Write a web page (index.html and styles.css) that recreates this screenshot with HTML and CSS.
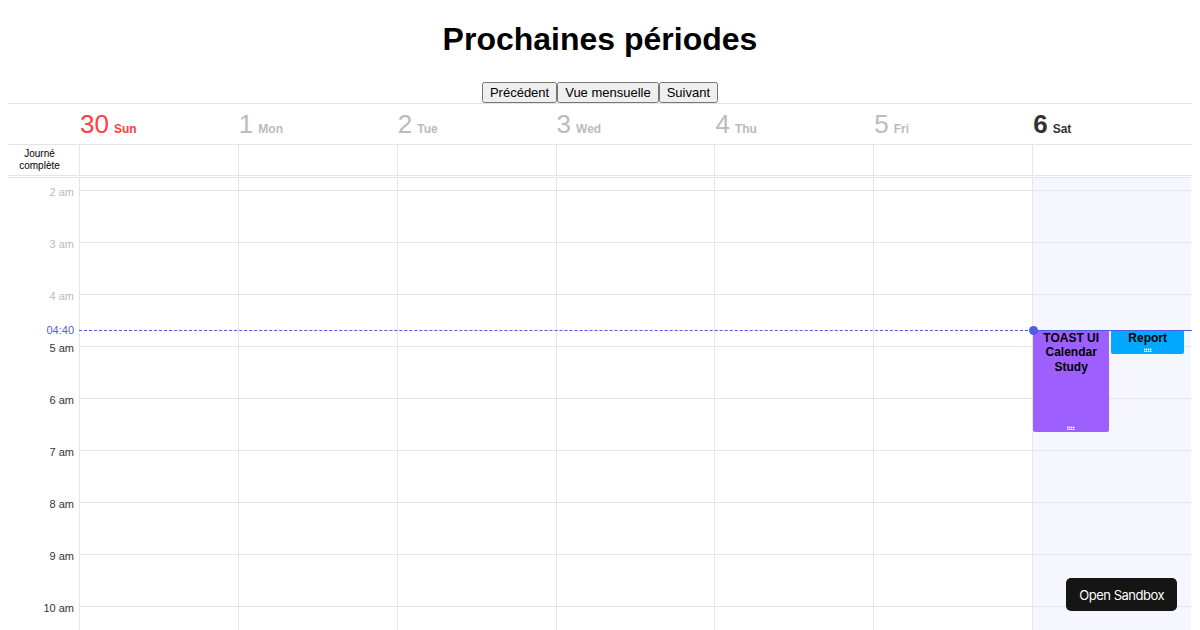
FILE: index.html
```html
<!DOCTYPE html>
<html lang="fr">
<head>
<meta charset="utf-8">
<title>Prochaines périodes</title>
<link rel="stylesheet" href="styles.css">
</head>
<body>
<h1 class="title">Prochaines périodes</h1>
<div class="nav"><button class="nav-btn">Précédent</button><button class="nav-btn">Vue mensuelle</button><button class="nav-btn">Suivant</button></div>
<div class="calendar">
  <div class="row day-names">
    <div class="time-col"></div>
    <div class="days">
      <div class="day-name is-sunday"><span class="num">30</span><span class="dname">Sun</span></div>
      <div class="day-name"><span class="num">1</span><span class="dname">Mon</span></div>
      <div class="day-name"><span class="num">2</span><span class="dname">Tue</span></div>
      <div class="day-name"><span class="num">3</span><span class="dname">Wed</span></div>
      <div class="day-name"><span class="num">4</span><span class="dname">Thu</span></div>
      <div class="day-name"><span class="num">5</span><span class="dname">Fri</span></div>
      <div class="day-name is-today"><span class="num">6</span><span class="dname">Sat</span></div>
    </div>
  </div>
  <div class="row allday">
    <div class="time-col allday-label">Journé<br>complète</div>
    <div class="days">
      <div class="col"></div><div class="col"></div><div class="col"></div><div class="col"></div><div class="col"></div><div class="col"></div><div class="col"></div>
    </div>
  </div>
  <div class="splitter"></div>
  <div class="row timegrid">
    <div class="time-col times">
      <div class="hour past">2 am</div>
      <div class="hour past">3 am</div>
      <div class="hour past">4 am</div>
      <div class="hour">5 am</div>
      <div class="hour">6 am</div>
      <div class="hour">7 am</div>
      <div class="hour">8 am</div>
      <div class="hour">9 am</div>
      <div class="hour">10 am</div>
      <div class="now-label">04:40</div>
    </div>
    <div class="days grid-days">
      <div class="col hours"></div>
      <div class="col hours"></div>
      <div class="col hours"></div>
      <div class="col hours"></div>
      <div class="col hours"></div>
      <div class="col hours"></div>
      <div class="col hours today">
        <div class="event ev-study">TOAST UI Calendar Study<span class="handle"></span></div>
        <div class="event ev-report">Report<span class="handle"></span></div>
      </div>
      <div class="now-line">
        <div class="now-past"></div>
        <div class="now-today"><span class="now-dot"></span></div>
      </div>
    </div>
  </div>
</div>
<a class="sandbox-btn">Open Sandbox</a>
</body>
</html>
```

FILE: styles.css
```css
html {
  overflow: hidden;
}

body {
  margin: 8px;
  font-family: "Liberation Sans", Arial, sans-serif;
  color: #000;
  background: #fff;
}

.title {
  font-size: 32px;
  font-weight: bold;
  text-align: center;
  margin: 13.44px 0 21.44px;
}

.nav {
  display: flex;
  justify-content: center;
  padding-top: 2px;
}

.nav-btn {
  font: 13px "Liberation Sans", Arial, sans-serif;
  margin: 0;
}

.calendar {
  border-top: 1px solid #e5e5e5;
}

.row {
  display: flex;
}

.time-col {
  width: 71px;
  flex: none;
  box-sizing: border-box;
}

.days {
  flex: 1;
  display: flex;
  padding-right: 1px;
  min-width: 0;
}

.day-names {
  height: 40px;
  border-bottom: 1px solid #e5e5e5;
}

.day-name {
  flex: 1;
  min-width: 0;
  box-sizing: border-box;
  border-left: 1px solid transparent;
  line-height: 40px;
  white-space: nowrap;
  color: #bbb;
}

.num {
  font-size: 26px;
}

.dname {
  font-size: 12px;
  font-weight: bold;
  margin-left: 5px;
}

.is-sunday {
  color: #ff4040;
}

.is-today {
  color: #333;
}

.is-today .num {
  font-weight: bold;
}

.allday {
  height: 30px;
  border-bottom: 1px solid #e5e5e5;
}

.allday-label {
  display: flex;
  align-items: center;
  justify-content: center;
  text-align: center;
  font-size: 10px;
  line-height: 11.5px;
  padding-right: 8px;
  color: #000;
}

.col {
  flex: 1;
  min-width: 0;
  box-sizing: border-box;
  border-left: 1px solid #e5e5e5;
}

.splitter {
  height: 1px;
  border-bottom: 1px solid #e5e5e5;
}

.timegrid {
  height: 452px;
  overflow: hidden;
}

.times {
  position: relative;
  padding-top: 8px;
  padding-right: 5px;
  text-align: right;
  font-size: 11px;
  color: #333;
}

.hour {
  height: 52px;
}

.hour.past {
  color: #bbb;
}

.now-label {
  position: absolute;
  right: 5px;
  top: 152px;
  transform: translateY(-50%);
  color: #515ce6;
}

.grid-days {
  position: relative;
}

.hours {
  background-image: linear-gradient(to bottom, #e5e5e5 0, #e5e5e5 1px, transparent 1px);
  background-size: 100% 52px;
  background-position: 0 12px;
  background-repeat: repeat-y;
}

.today {
  position: relative;
  background-color: #f6f7fe;
}

.event {
  position: absolute;
  top: 152px;
  box-sizing: border-box;
  padding: 1px 2px;
  font-size: 12px;
  font-weight: bold;
  line-height: 14.5px;
  text-align: center;
  color: #000;
  border-radius: 2px;
}

.ev-study {
  left: 0;
  width: 76px;
  height: 102px;
  background: #9e5fff;
}

.ev-report {
  left: 78px;
  width: 73px;
  height: 24px;
  background: #00a9ff;
}

.handle {
  position: absolute;
  left: 50%;
  bottom: 2px;
  width: 8px;
  height: 4px;
  margin-left: -4px;
  background-image:
    repeating-linear-gradient(90deg, rgba(255, 255, 255, 0.55) 0 1px, transparent 1px 2px),
    repeating-linear-gradient(0deg, rgba(255, 255, 255, 0.55) 0 1px, transparent 1px 2px);
}

.now-line {
  position: absolute;
  top: 152px;
  left: 0;
  right: 0;
  display: flex;
  height: 1px;
}

.now-past {
  flex: 6;
  border-top: 1px dashed #515ce6;
}

.now-today {
  flex: 1;
  position: relative;
  border-top: 1px solid #515ce6;
}

.now-dot {
  position: absolute;
  left: -4px;
  top: -5px;
  width: 9px;
  height: 9px;
  border-radius: 50%;
  background: #515ce6;
}

.sandbox-btn {
  position: fixed;
  right: 23px;
  bottom: 19px;
  height: 33px;
  padding: 0 13px;
  display: flex;
  align-items: center;
  box-sizing: border-box;
  background: #151515;
  color: #fff;
  border-radius: 5px;
  font-family: Inter, "Liberation Sans", sans-serif;
  font-size: 13px;
  letter-spacing: -0.5px;
  text-decoration: none;
}
```
